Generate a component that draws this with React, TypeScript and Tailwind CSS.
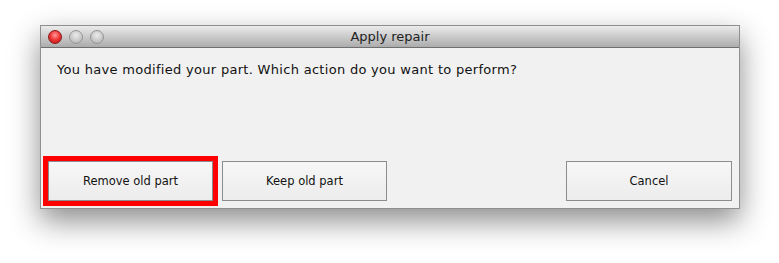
import React from "react";

function Light({ color }: { color: "red" | "grey" }) {
  const bg =
    color === "red"
      ? "bg-[radial-gradient(circle_at_50%_35%,#ff9c9c_0%,#f23a3a_45%,#b00d0d_100%)] border-[#8a1a1a]"
      : "bg-[radial-gradient(circle_at_50%_35%,#ebebeb_0%,#cdcdcd_50%,#a9a9a9_100%)] border-[#959595]";
  return <div className={`w-[14px] h-[14px] rounded-full border ${bg}`} />;
}

function Btn({ label, w }: { label: string; w: string }) {
  return (
    <div
      className={`${w} h-[40px] border border-[#8c8c8c] bg-[linear-gradient(#f7f7f7,#ececec)] flex items-center justify-center pt-[2px] text-[11.5px] text-[#111]`}
    >
      {label}
    </div>
  );
}

export default function App() {
  return (
    <div
      className="w-[779px] h-[263px] bg-white pt-[25px] pl-[40px]"
      style={{ fontFamily: '"DejaVu Sans", "Liberation Sans", sans-serif' }}
    >
      <div className="w-[700px] h-[184px] flex flex-col shadow-[0_12px_28px_rgba(0,0,0,0.45)] border border-[#8f8f8f]">
        <div className="relative h-[22px] flex items-center bg-[linear-gradient(#ebebeb,#cbcbcb_50%,#acacac)] border-b border-[#6f6f6f]">
          <div className="flex gap-[7px] pl-[7px]">
            <Light color="red" />
            <Light color="grey" />
            <Light color="grey" />
          </div>
          <div className="absolute inset-0 flex items-center justify-center text-[13px] text-[#222]">
            Apply repair
          </div>
        </div>
        <div className="flex-1 bg-[#f1f1f1] flex flex-col px-[7px] pb-[7px]">
          <div className="pl-[9px] pt-[12px] text-[13px] tracking-[0.3px] text-[#111] h-[113px]">
            You have modified your part. Which action do you want to perform?
          </div>
          <div className="flex items-end">
            <div className="relative">
              <Btn label="Remove old part" w="w-[165px]" />
              <div className="absolute -inset-[5px] border-[5px] border-[#ff0000]" />
            </div>
            <div className="ml-[9px]">
              <Btn label="Keep old part" w="w-[165px]" />
            </div>
            <div className="ml-auto">
              <Btn label="Cancel" w="w-[166px]" />
            </div>
          </div>
        </div>
      </div>
    </div>
  );
}
